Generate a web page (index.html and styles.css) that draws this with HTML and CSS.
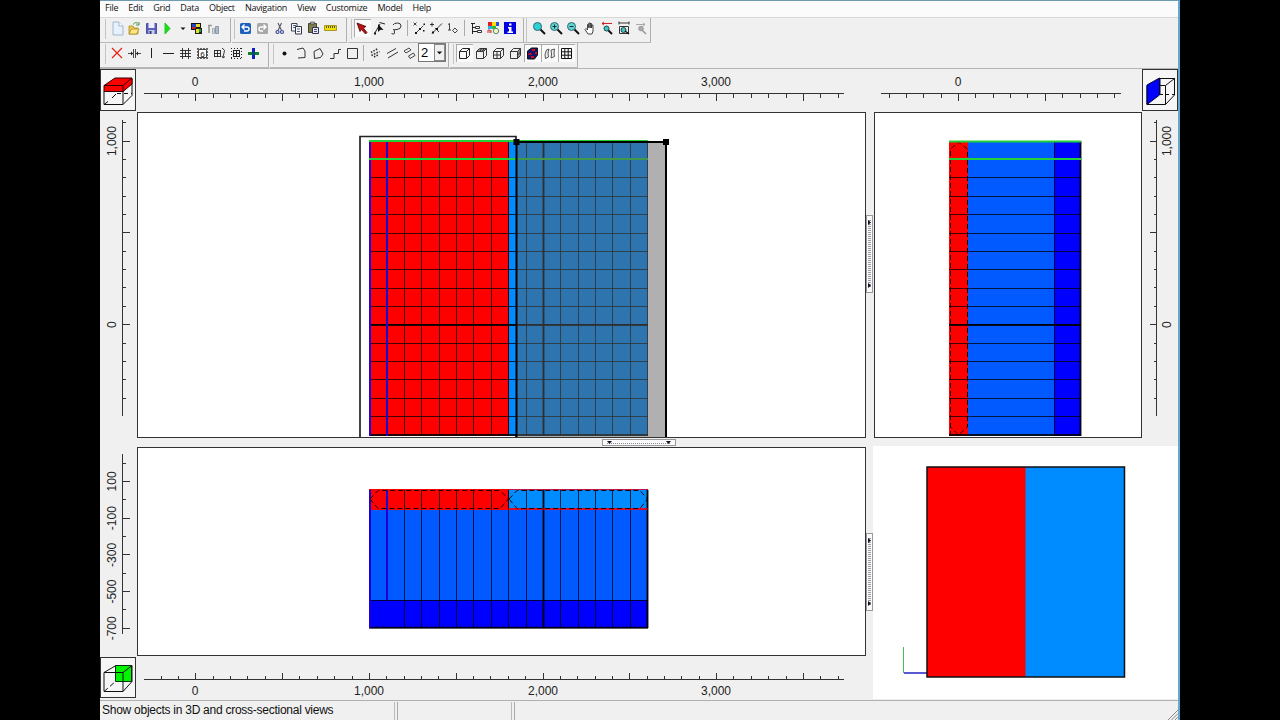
FILE: index.html
```
<!DOCTYPE html>
<html lang="en">
<head>
  <meta charset="UTF-8">
  <title>Model Viewer</title>
  <link rel="stylesheet" href="styles.css">
</head>
<body>
<div class="window">

  <nav class="menu">
    <span>File</span><span>Edit</span><span>Grid</span><span>Data</span><span>Object</span><span>Navigation</span><span>View</span><span>Customize</span><span>Model</span><span>Help</span>
  </nav>

  <div class="toolbar-row">
    <div class="toolbar tb-file">
      <button><svg viewBox="0 0 16 16"><path d="M4 2h6l4 4v9H4z" fill="#e6f1fb" stroke="#8fa9c4" stroke-width=".8"/><path d="M10 2v4h4" fill="#fff" stroke="#8fa9c4" stroke-width=".8"/></svg></button>
      <button><svg viewBox="0 0 16 16"><path d="M3 14V6h4l1 2h4v6z" fill="#f2c94c" stroke="#a98a2a" stroke-width=".8"/><path d="M3 14l2.500-5H13l-2.500 5z" fill="#ffe680" stroke="#a98a2a" stroke-width=".8"/><path d="M7 4.500q3-3.500 5.500-.5M13 2v3h-3" fill="none" stroke="#4a9a3a"/></svg></button>
      <button><svg viewBox="0 0 16 16"><path d="M3.500 3.500h10v10h-10z" fill="#5a62b8" stroke="#4a4f9c"/><path d="M5.500 3h6v5h-6z" fill="#eef"/><path d="M5.500 10h6v4h-6z" fill="#c8cce8"/><path d="M6.500 11h2v3h-2z" fill="#333a80"/></svg></button>
      <button class="run"><svg viewBox="0 0 16 16"><path d="M5 3l5 5.500L5 14z" fill="#18e018" stroke="#20c820"/></svg></button>
      <button class="caret"><svg viewBox="0 0 8 16"><path d="M1.500 7.500h5L4 10z"/></svg></button>
      <button><svg viewBox="0 0 16 16"><path d="M3 3h10v7H3z" fill="#111"/><path d="M4 4h4v3H4z" fill="#2244cc"/><path d="M8 4h4v3H8z" fill="#e8d820"/><path d="M4 7h4v2H4z" fill="#d02020"/><path d="M7 8h7v6H7z" fill="#222"/><path d="M8 9h3v4H8z" fill="#e8e020"/><path d="M11 9h2v3h-2z" fill="#20a050"/></svg></button>
      <button><svg viewBox="0 0 16 16"><path d="M3 5.500h4M4 5v8" fill="none" stroke="#999" stroke-width="1.600"/><path d="M7.500 8.500h2v5h-2z" fill="#ddd" stroke="#aaa"/><path d="M10.500 6.500h3v7h-3z" fill="#a8bccb" stroke="#8a9aa8"/></svg></button>
    </div>
    <div class="toolbar tb-edit">
      <button><svg viewBox="0 0 16 16"><rect x="3" y="3" width="11" height="11" rx="1.500" fill="#1c62bd"/><path d="M5 7h5q2 0 2 2t-2 2H7M7.500 4.500L5 7l2.500 2.500" fill="none" stroke="#fff" stroke-width="1.400"/></svg></button>
      <button><svg viewBox="0 0 16 16"><rect x="3" y="3" width="11" height="11" rx="1.500" fill="#a8a8a8"/><path d="M12 7H7Q5 7 5 9t2 2h2M9.500 4.500L12 7 9.500 9.500" fill="none" stroke="#fff" stroke-width="1.400"/></svg></button>
      <button><svg viewBox="0 0 16 16"><path d="M7 3l3.500 7.500M10.500 3L7 10.500" fill="none" stroke="#556" stroke-width="1.100"/><g stroke="#3a4a9a" stroke-width="1.200"><circle cx="6.500" cy="12" r="1.500" fill="none"/><circle cx="11" cy="12" r="1.500" fill="none"/></g></svg></button>
      <button><svg viewBox="0 0 16 16"><path d="M3.500 3.500h5.500v7.500h-5.500z" fill="#f6f8ff" stroke="#445"/><path d="M7.500 6.500h6v7.500h-6z" fill="#f6f8ff" stroke="#334"/><path d="M5 5.500h3M5 7.500h2M9 9h3M9 11.500h3" fill="none" stroke="#567"/></svg></button>
      <button><svg viewBox="0 0 16 16"><path d="M3.500 3.500h8v9h-8z" fill="#7b7b4c" stroke="#443"/><path d="M5.500 2h4v2h-4z" fill="#bbb" stroke="#333" stroke-width=".6"/><path d="M7.500 7.500h6v6h-6z" fill="#e4eafa" stroke="#335"/><path d="M9 9.500h3M9 11.500h3" fill="none" stroke="#456"/></svg></button>
      <button><svg viewBox="0 0 16 16"><path d="M2.500 5.500h12v5h-12z" fill="#f0e000" stroke="#a89a20"/><path d="M4.500 6v2M6.500 6v2M8.500 6v2M10.500 6v2M12.500 6v2" fill="none" stroke="#554"/></svg></button>
    </div>
    <div class="toolbar tb-draw">
      <button class="pressed"><svg viewBox="0 0 16 16"><path d="M3 3l9 3.500-2.700 1.500 3.700 4.500-1.500 1.500-4-4.500L6 11.500z" fill="#b81414" stroke="#500" stroke-width=".8"/></svg></button>
      <button><svg viewBox="0 0 16 16"><path d="M3.500 14l1.500-3 4-7M8.500 2.500L14 4" fill="none" stroke="#222"/><path d="M3 12.500h2v2H3zM7 4l5.500 6-3-.3L7 12z"/></svg></button>
      <button><svg viewBox="0 0 16 16"><path d="M5 5Q6 3 9.500 3T13 6 9 9.500 5.500 9.500 6.500 12 3.500 13.500" fill="none" stroke="#333"/></svg></button>
      <i class="sep"></i>
      <button><svg viewBox="0 0 16 16"><path d="M2.500 2.500l3 3M5.500 2.500l-3 3M4.500 13.500l9-9" fill="none" stroke="#333" stroke-width=".9" stroke-dasharray="5 1"/><path d="M4 12h2v2H4zM8 8h2v2H8zM12.500 3.500h1.500V5h-1.500zM12 10h1.500v1.500H12z"/></svg></button>
      <button><svg viewBox="0 0 16 16"><path d="M2 4.500h4M4 2.500v4M4 13.500l10-10M7 8l4 4" fill="none" stroke="#222" stroke-width=".9"/><path d="M4 11.500h2v2H4zM8 8h2v2H8z"/></svg></button>
      <button><svg viewBox="0 0 16 16"><path d="M3 4.500l1.500-1V10M3 10h3" fill="none" stroke="#444"/><path d="M10 8l2.500 2.500L10 13l-2.500-2.500z" fill="none" stroke="#444"/></svg></button>
      <i class="sep"></i>
      <button><svg viewBox="0 0 16 16"><path d="M4.500 3v11M3 3.500h4M4 7.500h4M5 11.500h4" stroke="#222" fill="none"/><path d="M7.500 6.500h4v2h-4zM9.500 10.500h4v2h-4z" fill="#fff" stroke="#333"/></svg></button>
      <button><svg viewBox="0 0 16 16"><path d="M3 2h4v4H3z" fill="#e02020"/><path d="M7 2h4v4H7z" fill="#ffe000"/><path d="M11 2h3v4h-3z" fill="#2050e0"/><path d="M3 6h4v3H3z" fill="#20b8e0"/><path d="M7 6h4v3H7z" fill="#30b830"/><path d="M3 13v-3h2v3M6 13v-3" stroke="#c33" fill="none"/><circle cx="11" cy="11" r="2.700" fill="#eef5c0" stroke="#5b8b70"/></svg></button>
      <button><svg viewBox="0 0 16 16"><path d="M2 2h12v12H2z" fill="#0000e0"/><path d="M7 3.500h2.500v2H7zM6 7h3.500v4.500H11V13H5.500v-1.500H7V8.500H6z" fill="#fff"/></svg></button>
      <i class="sep wide"></i>
      <button><svg viewBox="0 0 16 16"><path d="M9 9l5 5" stroke="#111" stroke-width="2"/><circle cx="6.500" cy="6.500" r="4" fill="#2ad4d4" stroke="#367"/></svg></button>
      <button><svg viewBox="0 0 16 16"><path d="M9 9l5 5" stroke="#111" stroke-width="2"/><circle cx="6.500" cy="6.500" r="4" fill="#5fd6d0" stroke="#367"/><path d="M4.500 6.500h4M6.500 4.500v4" stroke="#133"/></svg></button>
      <button><svg viewBox="0 0 16 16"><path d="M9 9l5 5" stroke="#111" stroke-width="2"/><circle cx="6.500" cy="6.500" r="4" fill="#5fd6d0" stroke="#367"/><path d="M4.500 6.500h4" stroke="#133"/></svg></button>
      <button><svg viewBox="0 0 16 16"><path d="M6 14l-3-4.500 1-1L5.500 10V4.500h1.300V8 3h1.400v5V3.500h1.400V8 5H11v6l-1 3z" fill="#fff" stroke="#333" stroke-width=".9"/></svg></button>
      <button><svg viewBox="0 0 16 16"><path d="M3 3.500h10M5 2L3 3.500 5 5" fill="none" stroke="#d02020"/><path d="M9 10l4 4" stroke="#111" stroke-width="2"/><circle cx="7.500" cy="8.500" r="2.500" fill="#40c8c8" stroke="#244"/></svg></button>
      <button><svg viewBox="0 0 16 16"><path d="M3 3h10M3 1.500v3M13 1.500v3M3.500 13.500v-7h9v7z" fill="none" stroke="#333"/><circle cx="7.500" cy="10" r="2.500" fill="#40c8c8" stroke="#244"/><path d="M9 11l4 3" stroke="#111" stroke-width="1.500"/></svg></button>
      <button><svg viewBox="0 0 16 16"><path d="M3 4.500h9M10 3l2 1.500L10 6" fill="none" stroke="#aaa"/><circle cx="8" cy="8.500" r="2.300" fill="#aaa" stroke="#999"/><path d="M9 10l4 4" stroke="#999" stroke-width="1.600"/></svg></button>
    </div>
  </div>

  <div class="toolbar-row second">
    <div class="toolbar tb-grid">
      <button><svg viewBox="0 0 16 16"><path d="M3 3l10 10M13 3L3 13" stroke="#e02818" stroke-width="1.300"/></svg></button>
      <button><svg viewBox="0 0 16 16"><path d="M7.500 4v9M9.500 4v9M2 8.500h4M11 8.500h4" fill="none" stroke="#333" stroke-width=".9"/><path d="M7 8.500L5 6.500v4zM10 8.500l2-2v4z"/></svg></button>
      <button><svg viewBox="0 0 16 16"><path d="M8.500 3v10" stroke="#222"/></svg></button>
      <button><svg viewBox="0 0 16 16"><path d="M3 8.500h11" stroke="#222"/></svg></button>
      <button><svg viewBox="0 0 16 16"><path d="M3 5.500h11M3 8.500h11M3 11.500h11M5.500 3v11M8.500 5v7M11.500 3v11" fill="none" stroke="#222" stroke-width=".9"/></svg></button>
      <button class="six"><svg viewBox="0 0 16 16"><path d="M4.500 4.500h8v8h-8z" fill="#fff" stroke="#444"/><path d="M3 3.500h11M3 13.500h11M3.500 3v11M13.500 3v11" fill="none" stroke="#666" stroke-dasharray="2 1"/><text x="6.200" y="11.500">6</text></svg></button>
      <button><svg viewBox="0 0 16 16"><path d="M3 5.500h6M3 8.500h6M3 11.500h6M3.500 5v7M6.500 5v7M9.500 5v7M11 3q4 2 2 5l-1 4M11 11l1 2 2-1.500" fill="none" stroke="#222" stroke-width=".9"/></svg></button>
      <button><svg viewBox="0 0 16 16"><path d="M5 5.500h7M5 8.500h7M5 11.500h7M5.500 5v7M8.500 5v7M11.500 5v7" fill="none" stroke="#222"/><path d="M3 3.500h11M3 13.500h11M3.500 3v11M13.500 3v11" fill="none" stroke="#222" stroke-dasharray="1 2"/></svg></button>
      <button><svg viewBox="0 0 16 16"><path d="M8.500 3v11" stroke="#1020c0" stroke-width="3"/><path d="M3 8.500h11" stroke="#108030" stroke-width="3"/><path d="M7 7h3v3H7z" fill="#084868"/></svg></button>
    </div>
    <div class="toolbar tb-shape">
      <button><svg viewBox="0 0 16 16"><circle cx="8.500" cy="8.500" r="2"/></svg></button>
      <button><svg viewBox="0 0 16 16"><path d="M4 4.500l6-1.500 2 3v6.500l-7 .5" fill="none" stroke="#333"/></svg></button>
      <button><svg viewBox="0 0 16 16"><path d="M4 6.500l6-3 3 5.500-2.500 3.500-6 1z" fill="none" stroke="#333"/></svg></button>
      <button><svg viewBox="0 0 16 16"><path d="M3 13.500h4v-5h4.500v-4H14" fill="none" stroke="#333"/></svg></button>
      <button><svg viewBox="0 0 16 16"><path d="M3.500 3.500h10v10h-10z" fill="none" stroke="#333"/></svg></button>
      <i class="sep"></i>
      <button><svg viewBox="0 0 16 16"><path d="M4 7.500l7-4M4.500 10.500l8-4M7 12l5-2.500" fill="none" stroke="#333" stroke-width="1.700" stroke-dasharray="1.500 1.300"/></svg></button>
      <button><svg viewBox="0 0 16 16"><path d="M3 8.500l9-5M4 13l10-6" fill="none" stroke="#333"/></svg></button>
      <button><svg viewBox="0 0 16 16"><path d="M3 6l5-3 2 2-5 3zM7.500 11l5-3 1.500 2.500-5 3z" fill="none" stroke="#444"/></svg></button>
      <div class="spin"><span>2</span><b><svg viewBox="0 0 10 16"><path d="M2 7h6L5 10z"/></svg></b></div>
    </div>
    <div class="toolbar tb-view">
      <button class="pressed"><svg viewBox="0 0 16 16"><path d="M3.500 6.500h7v7h-7zM3.500 6.500l3-3h7v7l-3 3M10.500 6.500l3-3" fill="none" stroke="#222"/></svg></button>
      <button><svg viewBox="0 0 16 16"><path d="M3.500 6.500h7v7h-7zM3.500 6.500l3-3h7v7l-3 3M10.500 6.500l3-3M5 5h7M7 6l2-3M9.500 6l2-3" fill="none" stroke="#222" stroke-width=".9"/></svg></button>
      <button><svg viewBox="0 0 16 16"><path d="M3.500 6.500h7v7h-7zM3.500 6.500l3-3h7v7l-3 3M10.500 6.500l3-3M7 6.500v7M3.500 10h7" fill="none" stroke="#222" stroke-width=".9"/></svg></button>
      <button><svg viewBox="0 0 16 16"><path d="M3.500 6.500h7v7h-7zM3.500 6.500l3-3h7v7l-3 3M10.500 6.500l3-3M12 5v7M10.500 10l3-3" fill="none" stroke="#222" stroke-width=".9"/></svg></button>
      <button class="pressed"><svg viewBox="0 0 16 16"><path d="M3.500 6l4-3h6v7l-3 4h-7z" fill="#15156c" stroke="#111"/><path d="M4.500 8h3v2h-3zM8 4h3v2H8zM7 11h3v2H7zM11 7h2v2h-2z" fill="#cc1020"/></svg></button>
      <button class="pressed"><svg viewBox="0 0 16 16"><path d="M5.500 5l2.500-1-1 4 .5 4-3 1.500-.5-4zM10 5l3.500-1-.5 4 .5 3.500-3.500 1.500.5-4z" fill="#e8eee8" stroke="#444" stroke-width=".9"/></svg></button>
      <button class="pressed"><svg viewBox="0 0 16 16"><path d="M3.500 3.500h10v10h-10zM3.500 6.800h10M3.500 10.200h10M6.800 3.500v10M10.200 3.500v10" fill="none" stroke="#111"/></svg></button>
    </div>
  </div>

  <main class="work">
    <div class="cube cube-top">
      <svg viewBox="100 69 36 42">
        <path d="M104 91v13.500h19V91M123 104.500l9-9V79M104 104.500l4-3M112 98l4-4" fill="none" stroke="#111"/>
        <path d="M117 93.500h15" fill="none" stroke="#111" stroke-dasharray="4 3"/>
        <path d="M104 85.500l11-7.500h17v6l-9 7.500h-19z" fill="#f00" stroke="#300"/>
        <path d="M104 85.500h19l9-7.500M123 86v5.500" fill="none" stroke="#300"/>
      </svg>
    </div>
    <svg class="ruler" id="rulerTop" viewBox="137 69 729 43"></svg>
    <svg class="ruler ruler-side" id="rulerSide" viewBox="874 69 268 43"></svg>
    <div class="cube cube-side">
      <svg viewBox="1142 69 36 42">
        <path d="M1147 85.500h18.500v19h-18.500zM1165.500 85.500l9-7v16.500l-9 9.500M1159 78.500h16M1160 78v17" fill="none" stroke="#111"/>
        <path d="M1160 94.500h15" fill="none" stroke="#111" stroke-dasharray="3 3"/>
        <path d="M1147 85l12.500-7v17l-12.500 9.500z" fill="#00f" stroke="#003"/>
      </svg>
    </div>

    <svg class="ruler" id="rulerLeft" viewBox="100 112 37 326"></svg>
    <section class="pane pane-top"><svg id="topView" viewBox="138 113 727 324"></svg></section>
    <div class="split-v"><i class="grip"></i></div>
    <section class="pane pane-side"><svg id="sideView" viewBox="875 113 266 324"></svg></section>
    <svg class="ruler" id="rulerRight" viewBox="1142 112 36 326"></svg>

    <div class="split-h"><i class="grip"></i></div>

    <svg class="ruler" id="rulerFront" viewBox="100 447 37 209"></svg>
    <section class="pane pane-front"><svg id="frontView" viewBox="138 448 727 207"></svg></section>
    <div class="split-v lower"><i class="grip"></i></div>
    <section class="view3d">
      <svg viewBox="873 446 305 253">
        <path d="M903.500 647v26" stroke="#4cc04c"/>
        <path d="M904 673h23" stroke="#2222c8" stroke-width="1.500"/>
        <path d="M927 467h99v210h-99z" fill="#f00"/>
        <path d="M1025.500 467h99v210h-99z" fill="#008cff"/>
        <path d="M927 467h197.500v210H927z" fill="none" stroke="#111" stroke-width="1.500"/>
      </svg>
    </section>

    <div class="cube cube-front">
      <svg viewBox="100 657 36 41">
        <path d="M115.500 665.500h16v16h-16z" fill="#00f400" stroke="#031"/>
        <path d="M104 672.500h19v19h-19zM104 672.500l12-7M123 672.500l9-7v16l-9 10" fill="none" stroke="#111"/>
        <path d="M104 691.500l11.500-10" fill="none" stroke="#111" stroke-dasharray="5 3"/>
      </svg>
    </div>
    <svg class="ruler" id="rulerBottom" viewBox="137 656 729 43"></svg>
  </main>

  <footer class="status">
    <div class="hint"><span>Show objects in 3D and cross-sectional views</span></div>
    <div class="coords"></div>
    <div class="rest"><svg viewBox="0 0 10 10"><path d="M0 10L10 0M3.500 10L10 3.500M7 10l3-3" stroke="#888"/></svg></div>
  </footer>

</div>
<script src="script.js"></script>
</body>
</html>
```
FILE: styles.css
```
* {
  box-sizing: border-box;
}

body {
  margin: 0;
  background: #000;
  font-family: "Liberation Sans", Arial, sans-serif;
  overflow: hidden;
}

.window {
  width: 1080px;
  height: 720px;
  margin: 0 auto;
  background: #f0f0f0;
  border-top: 1px solid #6d9bb0;
  border-right: 2px solid #62a9cc;
  display: flex;
  flex-direction: column;
}

svg {
  display: block;
}

/* menu */
.menu {
  height: 16px;
  flex: none;
  background: #fbfbfb;
  display: flex;
  gap: 10.1px;
  padding-left: 5px;
  font: 9px/14px "Open Sans", "Noto Sans", sans-serif;
  letter-spacing: -0.27px;
  color: #111;
}

/* toolbars */
.toolbar-row {
  height: 26px;
  flex: none;
  display: flex;
  gap: 1px;
  border-top: 1px solid #d8d8d8;
}

.toolbar-row.second {
  border-top: 0;
  border-bottom: 1px solid #b4b4b4;
}

.toolbar {
  display: flex;
  align-items: center;
  padding: 0 0 5px 9px;
  border-right: 1px solid #b0b0b0;
  border-bottom: 1px solid #b8b8b8;
  background: linear-gradient(#c4c4c4, #c4c4c4) 5px 1px / 1px 20px no-repeat;
}

.tb-file { width: 131px; }
.tb-edit { width: 115px; padding-left: 5px; background-position: 2px 1px; }
.tb-draw { width: 303px; padding-left: 6px; background-position: 3px 1px; }
.tb-grid { width: 169px; }
.tb-shape { width: 179px; padding-left: 6px; background-position: 3px 1px; }
.tb-view { width: 128px; padding-left: 6px; background-position: 3px 1px; }

.toolbar button {
  width: 17px;
  height: 18px;
  flex: none;
  padding: 0;
  border: 0;
  background: none;
}

.toolbar button.pressed {
  background: #fafafa;
  box-shadow: inset 1px 1px #aaa;
}

.toolbar button svg {
  width: 16px;
  height: 16px;
  fill: none;
}

.toolbar path:not([fill]):not([stroke]),
.toolbar circle:not([fill]) {
  fill: #111;
}

.toolbar .run {
  width: 19px;
}

.toolbar .caret {
  width: 8px;
  margin-right: 1px;
}

.toolbar .caret svg {
  width: 8px;
}

.six text {
  font: 8px "Liberation Sans", sans-serif;
  fill: #111;
}

.sep {
  width: 1px;
  height: 16px;
  margin: 0 3px 0 2px;
  background: #aaa;
}

.sep.wide {
  width: 4px;
  height: 25px;
  margin: 0 4px -5px;
  background: none;
  border-left: 1px solid #b0b0b0;
  border-right: 1px solid #c4c4c4;
}

.spin {
  width: 28px;
  height: 19px;
  display: flex;
  background: #fff;
  border: 1px solid #777;
  font-size: 13px;
  line-height: 18px;
}

.spin span {
  width: 15px;
  padding-left: 2px;
}

.spin b {
  width: 11px;
  background: #f0f0f0;
  border: 1px solid #888;
}

.spin svg {
  width: 9px;
  height: 15px;
}

/* work area */
.work {
  height: 631px;
  flex: none;
  display: grid;
  grid-template-columns: 37px 729px 8px 268px 36px;
  grid-template-rows: 43px 326px 9px 209px 44px;
  grid-template-areas:
    "ctop rtop  .   rside cside"
    "rl   top   sv  side  rr"
    ".    sh    v3d v3d   v3d"
    "rf   front v3d v3d   v3d"
    "cf   rb    v3d v3d   v3d";
}

.cube {
  width: 36px;
  height: 42px;
  border: 1px solid #333;
  background: #f6f6f6;
}

.cube svg {
  margin: -1px;
  width: 36px;
  height: 42px;
}

.cube-top { grid-area: ctop; }
.cube-side { grid-area: cside; }
.cube-front { grid-area: cf; margin-top: 1px; height: 41px; }
.cube-front svg { height: 41px; }

.ruler {
  width: 100%;
  height: 100%;
}

#rulerTop { grid-area: rtop; }
#rulerSide { grid-area: rside; }
#rulerLeft { grid-area: rl; }
#rulerRight { grid-area: rr; }
#rulerFront { grid-area: rf; }
#rulerBottom { grid-area: rb; height: 43px; }

.ruler path {
  stroke: #333;
  shape-rendering: crispEdges;
}

.ruler text {
  font-size: 12px;
  fill: #222;
  text-anchor: middle;
}

.pane {
  background: #fff;
  border: 1px solid #333;
}

.pane svg {
  width: 100%;
  height: 100%;
}

.pane-top { grid-area: top; }
.pane-side { grid-area: side; }
.pane-front { grid-area: front; }

.split-v {
  grid-area: sv;
  padding: 103px 1px 0 0;
}

.split-v.lower {
  grid-area: 4 / 3 / 5 / 4;
  z-index: 1;
  height: 253px;
  padding-top: 86px;
  background: #f0f0f0;
  width: 7px;
}

.split-h {
  grid-area: sh;
  padding: 1px 0 0 465px;
}

.grip {
  display: flex;
  justify-content: space-between;
  border: 1px solid #999;
  background: #fafafa;
}

.split-h .grip {
  width: 74px;
  height: 7px;
  padding: 1px 4px;
  background: linear-gradient(90deg, #889 50%, transparent 50%) 12px 2px / 2px 1px repeat-x content-box, #fafafa;
}

.split-v .grip {
  width: 7px;
  height: 78px;
  flex-direction: column;
  padding: 4px 1px;
  background: linear-gradient(#99a 50%, transparent 50%) 0 0 / 3px 2px repeat-y content-box, #fafafa;
}

.grip::before,
.grip::after {
  content: "";
  width: 5px;
  height: 3px;
  background: #112;
  clip-path: polygon(0 0, 100% 0, 50% 100%);
}

.split-v .grip::before,
.split-v .grip::after {
  width: 3px;
  height: 5px;
  clip-path: polygon(0 0, 100% 50%, 0 100%);
}

.view3d {
  grid-area: v3d;
  margin: 8px 0 0 7px;
  background: #fff;
  height: 253px;
}

.view3d svg {
  width: 305px;
  height: 253px;
}

/* drawing */
.grid-line { stroke: #000; stroke-opacity: .75; stroke-width: 1; fill: none; }
.bold-line { stroke: #000; stroke-opacity: .85; stroke-width: 2; fill: none; }
.green { stroke: #22d03a; stroke-width: 2; }
.blue { stroke: #1c00d8; stroke-width: 2; }
.dash { stroke: #200; stroke-dasharray: 5 3; fill: none; }
.seam { stroke: #c01848; stroke-width: 1; }

/* status bar */
.status {
  flex: 1;
  display: flex;
  gap: 2px;
  padding-top: 1px;
  border-top: 1px solid #b0b0b0;
  font-size: 12px;
  line-height: 17px;
  letter-spacing: -0.26px;
  color: #111;
}

.hint {
  width: 295px;
  padding-left: 2px;
  border-right: 1px solid #bbb;
}

.coords {
  width: 115px;
  border-left: 1px solid #aaa;
  border-right: 1px solid #bbb;
}

.rest {
  flex: 1;
  display: flex;
  justify-content: flex-end;
  align-items: flex-end;
  border-left: 1px solid #aaa;
}

.rest svg {
  width: 10px;
  height: 10px;
}
```
FILE: script.js
```
const XSTEP = 17.36;
const YSTEP = 18.36;

function fmt(n) {
  return n.toLocaleString('en-US');
}

// dir is the side of the base line on which the ticks stand
function hRuler(id, from, to, zero, base, dir, first, last, labelY) {
  let d = `M${from} ${base}H${to}`;
  let labels = '';
  for (let v = first; v <= last; v++) {
    const x = Math.floor(zero + v * XSTEP) + 0.5;
    d += `M${x} ${base}v${dir * (v % 5 === 0 ? 7 : 4)}`;
    if (v % 10 === 0) {
      labels += `<text x="${x - 0.5}" y="${labelY}">${fmt(v * 100)}</text>`;
    }
  }
  document.getElementById(id).innerHTML = `<path d="${d}"/>${labels}`;
}

function vRuler(id, from, to, base, dir, ticks, labelX) {
  let d = `M${base} ${from}V${to}`;
  let labels = '';
  ticks.forEach(t => {
    d += `M${base} ${Math.floor(t.y) + 0.5}h${dir * (t.major ? 7 : 3)}`;
    if (t.label) {
      labels += `<text transform="translate(${labelX} ${t.y}) rotate(-90)">${t.label}</text>`;
    }
  });
  document.getElementById(id).innerHTML = `<path d="${d}"/>${labels}`;
}

hRuler('rulerTop', 144, 844, 195.8, 93.5, 1, -2, 37, 86);
hRuler('rulerSide', 881, 1121, 958.5, 93.5, 1, -4, 9, 86);
hRuler('rulerBottom', 144, 844, 195.8, 679.5, -1, -2, 37, 695);

const tall = [];
for (let v = 11; v >= -4; v--) {
  tall.push({ y: 324.7 - v * YSTEP, major: v % 5 === 0, label: v % 10 === 0 ? fmt(v * 100) : '' });
}
vRuler('rulerLeft', 120, 416, 122.5, 1, tall, 116);
vRuler('rulerRight', 120, 416, 1156.5, -1, tall, 1171);

const short = [];
for (let v = 2; v >= -7; v--) {
  const odd = v % 2 !== 0;
  short.push({ y: 499.8 - v * YSTEP, major: odd, label: odd ? String(v * 100) : '' });
}
vRuler('rulerFront', 454, 634, 122.5, 1, short, 116);

function rect(x, y, x2, y2, fill) {
  return `<rect x="${x}" y="${y}" width="${x2 - x}" height="${y2 - y}" fill="${fill}"/>`;
}

function columns(from, to, y1, y2) {
  let d = '';
  for (let i = from; i <= to; i++) {
    d += `M${Math.floor(369.8 + i * XSTEP) + 0.5} ${y1}V${y2}`;
  }
  return `<path class="grid-line" d="${d}"/>`;
}

function rows(x1, x2) {
  let d = '';
  for (let i = 2; i <= 15; i++) {
    d += `M${x1} ${Math.floor(141.2 + i * YSTEP) + 0.5}H${x2}`;
  }
  return `<path class="grid-line" d="${d}"/>`;
}

document.getElementById('topView').innerHTML =
  '<path d="M360 440V136.500H516V440" fill="none" stroke="#222" stroke-width="1.700"/>' +
  rect(369, 141, 509, 436, '#f00') +
  rect(509, 141, 648, 436, '#008cff') +
  columns(2, 16, 141, 436) + rows(369, 648) +
  '<path class="bold-line" d="M369 325H648M543.500 141V436M369 435H648"/>' +
  '<path class="blue" d="M370 141V436M387 141V436"/>' +
  '<path class="green" d="M369 141H648M369 159H648"/>' +
  rect(516, 142, 666, 440, 'rgba(94,94,94,.49)') +
  '<path d="M516.500 440V142H666V440" fill="none" stroke="#000" stroke-width="2"/>' +
  rect(513.5, 139, 519.5, 145, '#000') +
  rect(663, 139, 669, 145, '#000');

document.getElementById('sideView').innerHTML =
  rect(949, 141, 968, 436, '#f00') +
  rect(968, 141, 1054, 436, '#005aff') +
  rect(1054, 141, 1081, 436, '#00f') +
  rows(949, 1081) +
  '<path class="grid-line" d="M1054.500 141V436"/>' +
  '<path class="bold-line" d="M949 325H1081M949 435H1081M1080.500 141V436"/>' +
  '<path class="dash" d="M950.500 436V149L958.500 142L967.500 149V427L958.500 435L950.500 427"/>' +
  '<path class="green" d="M949 141.500H1081M949 159H1081"/>';

document.getElementById('frontView').innerHTML =
  rect(369, 489, 648, 510, '#f00') +
  rect(509, 490, 648, 508, '#008cff') +
  rect(369, 510, 648, 600, '#005aff') +
  rect(369, 600, 648, 628, '#00f') +
  columns(2, 16, 490, 628) +
  '<path class="grid-line" d="M369 600.500H648"/>' +
  '<path class="bold-line" d="M543.500 490V628M647.500 490V628M369 627.700H648"/>' +
  '<path class="blue" d="M370 490V628M387 490V600"/>' +
  '<path class="seam" d="M509 489.500H648M509 509H648"/>' +
  '<path class="dash" d="M370 499L378 490.500H500L508.500 499L500 508.500H378Z"/>' +
  '<path class="dash" d="M509 499L517 490.500H640L647.500 499L640 508.500H517Z"/>';
```
